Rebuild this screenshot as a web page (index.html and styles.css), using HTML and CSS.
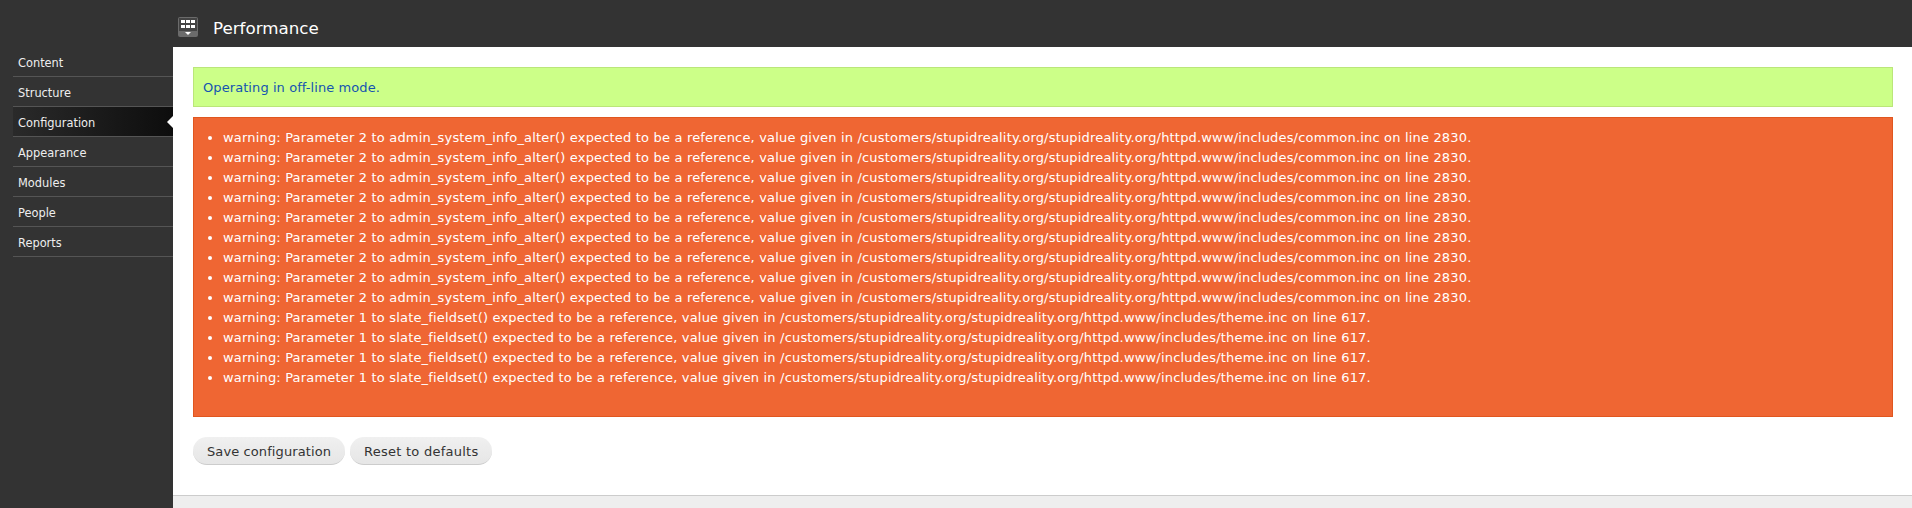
FILE: index.html
```html
<!DOCTYPE html>
<html lang="en">

<head>
  <meta charset="UTF-8">
  <title>Performance</title>
  <link rel="stylesheet" href="styles.css">
</head>

<body>
  <div class="header">
    <a class="shortcut" href="#">
      <svg width="20" height="20" viewBox="0 0 20 20">
        <rect width="20" height="20" rx="2" fill="#6b6b6b"></rect>
        <rect x="1" y="1" width="18" height="13" fill="#444"></rect>
        <path d="M3 3h4v3H3zM8 3h4v3H8zM13 3h4v3h-4zM3 8h4v3H3zM8 8h4v3H8zM13 8h4v3h-4z" fill="#fff"></path>
        <path d="M7 15h6l-3 3z" fill="#fff"></path>
      </svg>
    </a>
    <h1>Performance</h1>
  </div>

  <div class="page">
    <ul class="nav">
      <li><a href="#">Content</a></li>
      <li><a href="#">Structure</a></li>
      <li class="active"><a href="#">Configuration</a></li>
      <li><a href="#">Appearance</a></li>
      <li><a href="#">Modules</a></li>
      <li><a href="#">People</a></li>
      <li><a href="#">Reports</a></li>
    </ul>

    <div class="main">
      <div class="content">
        <div class="status">Operating in off-line mode.</div>

        <div class="error">
          <ul>
            <li>warning: Parameter 2 to admin_system_info_alter() expected to be a reference, value given in /customers/stupidreality.org/stupidreality.org/httpd.www/includes/common.inc on line 2830.</li>
            <li>warning: Parameter 2 to admin_system_info_alter() expected to be a reference, value given in /customers/stupidreality.org/stupidreality.org/httpd.www/includes/common.inc on line 2830.</li>
            <li>warning: Parameter 2 to admin_system_info_alter() expected to be a reference, value given in /customers/stupidreality.org/stupidreality.org/httpd.www/includes/common.inc on line 2830.</li>
            <li>warning: Parameter 2 to admin_system_info_alter() expected to be a reference, value given in /customers/stupidreality.org/stupidreality.org/httpd.www/includes/common.inc on line 2830.</li>
            <li>warning: Parameter 2 to admin_system_info_alter() expected to be a reference, value given in /customers/stupidreality.org/stupidreality.org/httpd.www/includes/common.inc on line 2830.</li>
            <li>warning: Parameter 2 to admin_system_info_alter() expected to be a reference, value given in /customers/stupidreality.org/stupidreality.org/httpd.www/includes/common.inc on line 2830.</li>
            <li>warning: Parameter 2 to admin_system_info_alter() expected to be a reference, value given in /customers/stupidreality.org/stupidreality.org/httpd.www/includes/common.inc on line 2830.</li>
            <li>warning: Parameter 2 to admin_system_info_alter() expected to be a reference, value given in /customers/stupidreality.org/stupidreality.org/httpd.www/includes/common.inc on line 2830.</li>
            <li>warning: Parameter 2 to admin_system_info_alter() expected to be a reference, value given in /customers/stupidreality.org/stupidreality.org/httpd.www/includes/common.inc on line 2830.</li>
            <li>warning: Parameter 1 to slate_fieldset() expected to be a reference, value given in /customers/stupidreality.org/stupidreality.org/httpd.www/includes/theme.inc on line 617.</li>
            <li>warning: Parameter 1 to slate_fieldset() expected to be a reference, value given in /customers/stupidreality.org/stupidreality.org/httpd.www/includes/theme.inc on line 617.</li>
            <li>warning: Parameter 1 to slate_fieldset() expected to be a reference, value given in /customers/stupidreality.org/stupidreality.org/httpd.www/includes/theme.inc on line 617.</li>
            <li>warning: Parameter 1 to slate_fieldset() expected to be a reference, value given in /customers/stupidreality.org/stupidreality.org/httpd.www/includes/theme.inc on line 617.</li>
          </ul>
        </div>

        <div class="buttons">
          <button class="button">Save configuration</button>
          <button class="button">Reset to defaults</button>
        </div>
      </div>
      <div class="footer"></div>
    </div>
  </div>
</body>

</html>
```

FILE: styles.css
```css
html,
body {
  height: 100%;
}

body {
  margin: 0;
  background: #333;
  font-family: "DejaVu Sans", Verdana, sans-serif;
  font-size: 13px;
  overflow: hidden;
  display: flex;
  flex-direction: column;
}

a {
  text-decoration: none;
}

.header {
  height: 47px;
  box-sizing: border-box;
  padding: 8px 0 0 178px;
  display: flex;
  align-items: center;
  flex-shrink: 0;
}

.shortcut {
  display: flex;
  margin-right: 15px;
  margin-top: -1px;
}

h1 {
  margin: 0;
  color: #fff;
  font-size: 16.7px;
  font-weight: normal;
}

.page {
  flex: 1;
  display: flex;
  min-height: 0;
}

.nav {
  width: 160px;
  margin: 0 0 0 13px;
  padding: 0;
  list-style: none;
  flex-shrink: 0;
}

.nav li {
  height: 30px;
  border-bottom: 1px solid #555;
  box-sizing: border-box;
  position: relative;
}

.nav a {
  display: block;
  padding: 1px 5px 0;
  line-height: 30px;
  color: #eee;
  font-size: 11.4px;
}

.nav .active {
  background: linear-gradient(to right, #2a2a2a, #0d0d0d);
}

.nav .active::after {
  content: "";
  position: absolute;
  right: 0;
  top: 9px;
  border: 6px solid transparent;
  border-left-width: 0;
  border-right-color: #fff;
}

.main {
  flex: 1;
  display: flex;
  flex-direction: column;
  background: #fff;
}

.content {
  flex: 1;
  padding: 20px 19px 0 20px;
}

.status {
  height: 40px;
  box-sizing: border-box;
  border: 1px solid #bbe67a;
  background: #ccff88;
  color: #1454b0;
  padding: 1px 0 0 9px;
  line-height: 38px;
  letter-spacing: 0.08px;
}

.error {
  height: 300px;
  box-sizing: border-box;
  margin-top: 10px;
  border: 1px solid #e0561f;
  background: #ef6633;
  color: #fff;
  letter-spacing: 0.18px;
}

.error ul {
  margin: 0;
  padding: 10px 0 0 29px;
}

.error li {
  line-height: 20px;
}

.buttons {
  margin-top: 20px;
  display: flex;
  gap: 5px;
}

.button {
  height: 28px;
  padding: 1px 14px 0;
  border: none;
  border-bottom: 1px solid #ccc;
  border-radius: 14px;
  background: linear-gradient(#f0f0f0, #e6e6e6);
  color: #333;
  font-family: inherit;
  font-size: 13px;
  letter-spacing: 0.1px;
}

.button + .button {
  letter-spacing: 0.25px;
}

.footer {
  height: 12px;
  border-top: 1px solid #ccc;
  background: #eee;
}
```
